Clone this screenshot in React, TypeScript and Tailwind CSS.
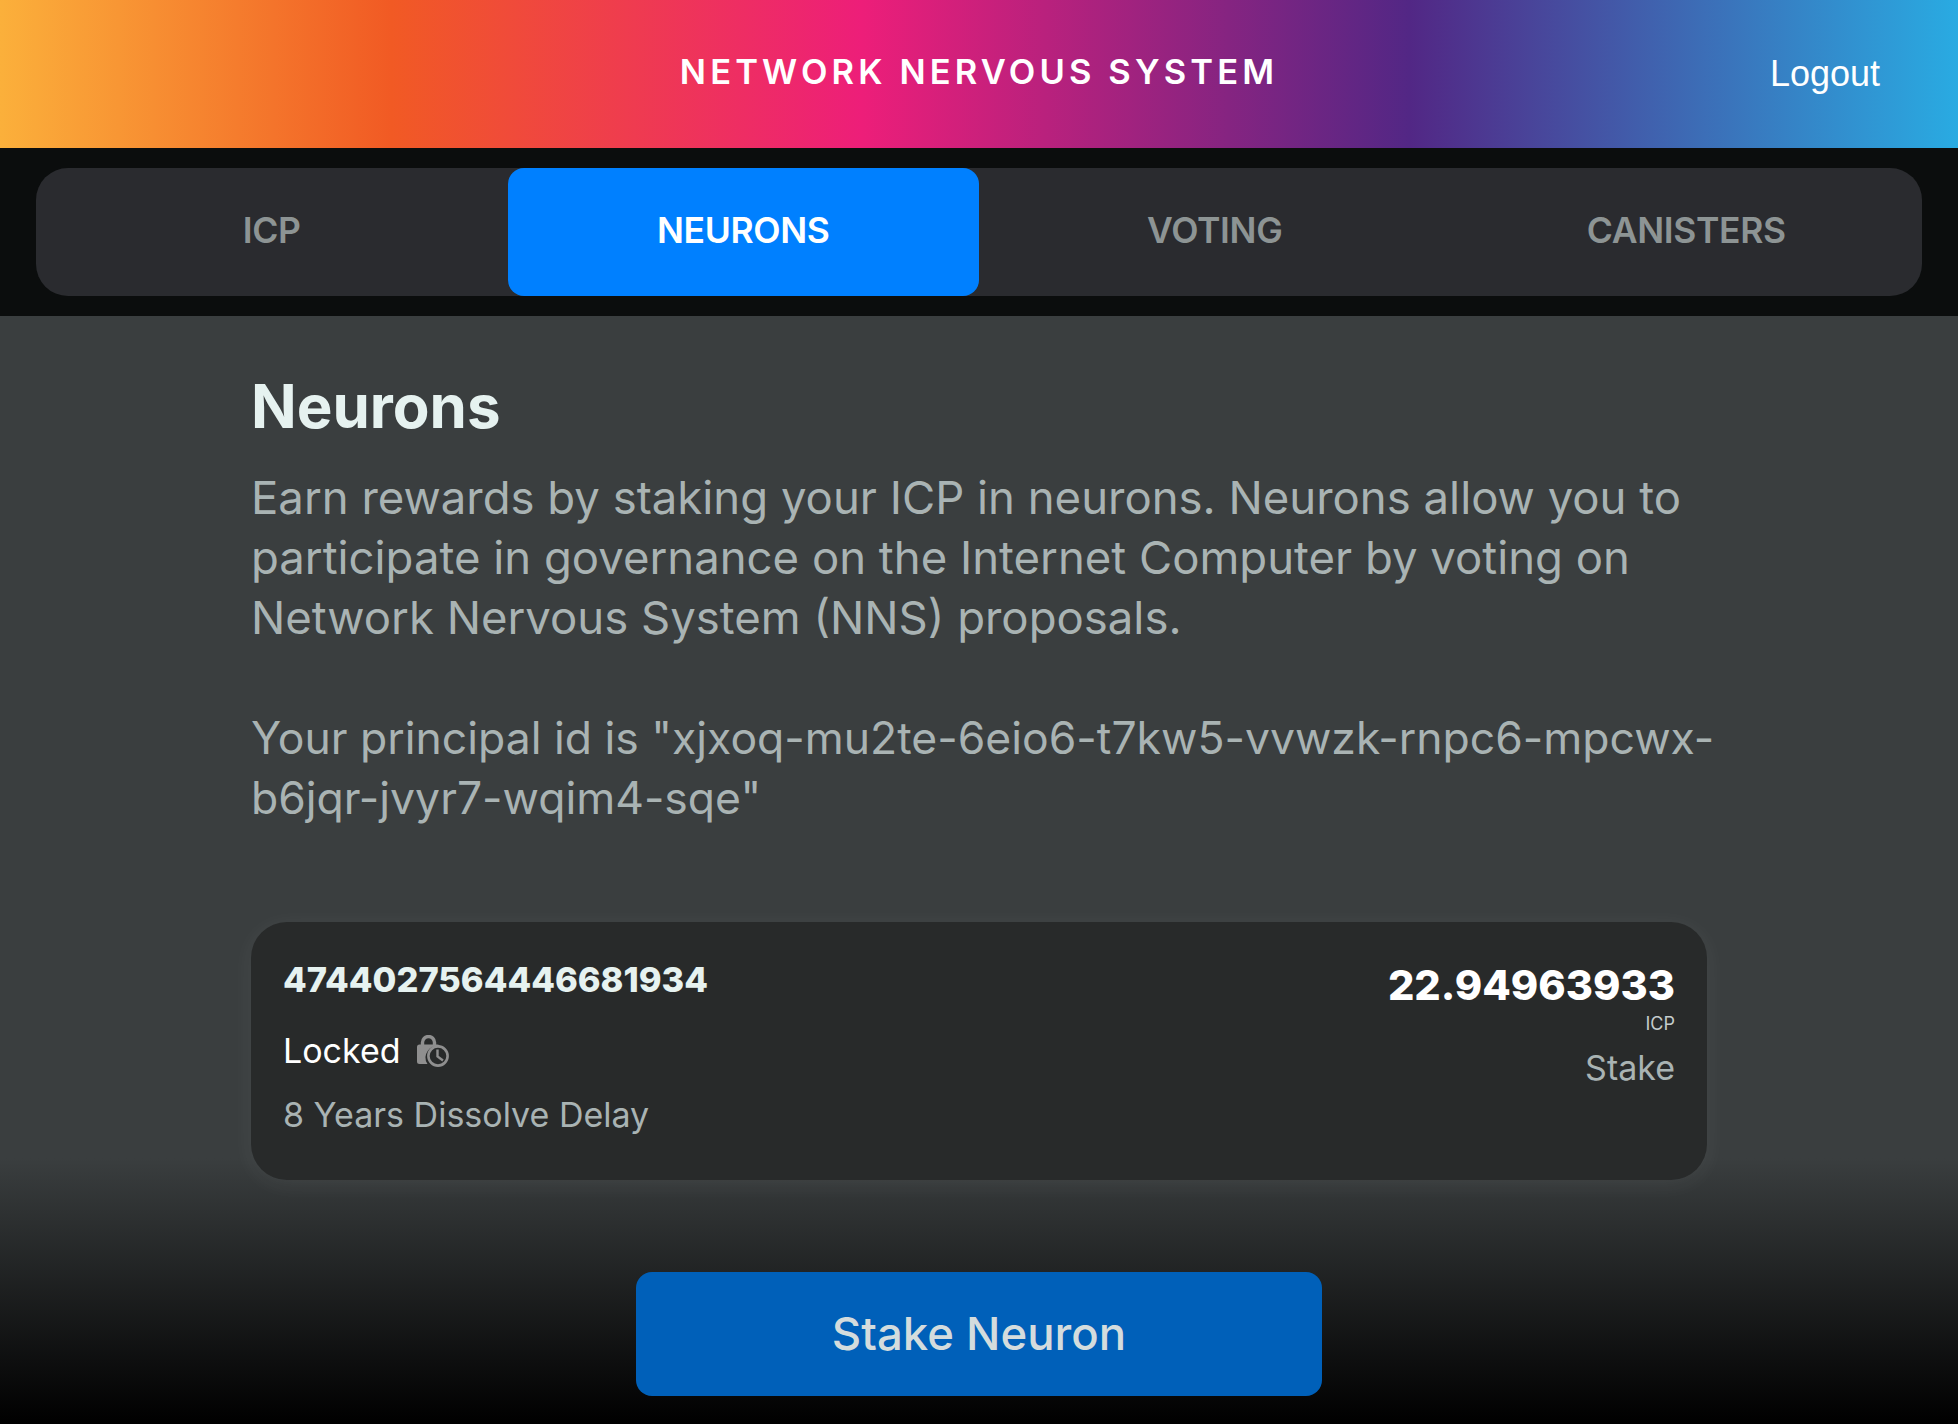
const tabs = ['ICP', 'NEURONS', 'VOTING', 'CANISTERS'];

function LockClockIcon() {
  return (
    <svg viewBox="0 0 32 32" className="w-8 h-8 shrink-0" fill="none">
      <path d="M5.5 11 V7.5 a6 6 0 0 1 12 0 V11" stroke="#8f8f8f" strokeWidth="3.4" />
      <path d="M0 12 a2.5 2.5 0 0 1 2.5-2.5 h18 a2.5 2.5 0 0 1 2.5 2 a11.5 11.5 0 0 0-12.5 17.5 H2.5 a2.5 2.5 0 0 1-2.5-2.5 z" fill="#8f8f8f" />
      <circle cx="21" cy="21" r="9.6" stroke="#8f8f8f" strokeWidth="2.6" />
      <path d="M20.5 14.5 V21.5 L26 25.5" stroke="#8f8f8f" strokeWidth="2.4" />
    </svg>
  );
}

export default function App() {
  return (
    <div className="h-screen flex flex-col overflow-hidden font-['Inter',sans-serif] bg-[#0b0d0d]">
      <header className="h-[148px] shrink-0 flex items-center justify-center relative bg-[linear-gradient(90deg,#fbb03b_0%,#f15a24_20%,#ed1e79_44%,#522785_72%,#29abe2_100%)]">
        <h1 className="pb-[5px] text-[34.5px] font-semibold tracking-[0.12em] text-white">NETWORK NERVOUS SYSTEM</h1>
        <button type="button" className="absolute right-[78px] text-[36px] text-white font-['Liberation_Sans',sans-serif]">
          Logout
        </button>
      </header>

      <nav className="h-[168px] shrink-0 px-9 py-5">
        <div className="h-[128px] flex rounded-[32px] bg-[#2a2b2f]">
          {tabs.map((t) => (
            <button
              key={t}
              type="button"
              className={`flex-1 pb-[3px] text-[35.5px] font-semibold tracking-[-0.01em] rounded-2xl ${
                t === 'NEURONS' ? 'bg-[#0080ff] text-white' : 'text-[#8d9494]'
              }`}
            >
              {t}
            </button>
          ))}
        </div>
      </nav>

      <main className="flex-1 flex flex-col pl-[251px] pr-[251px] pt-[58px] bg-[linear-gradient(180deg,#3a3e3f_0%,#3a3e3f_76%,#000000_100%)]">
        <h2 className="text-[60px] leading-[64px] font-bold text-[#e6f2f0]">Neurons</h2>
        <p className="mt-[30px] text-[45.5px] leading-[60px] text-[#a9b3b3] whitespace-nowrap">
          Earn rewards by staking your ICP in neurons. Neurons allow you to
          <br />
          participate in governance on the Internet Computer by voting on
          <br />
          Network Nervous System (NNS) proposals.
        </p>
        <p className="mt-[60px] text-[44.5px] leading-[60px] text-[#a9b3b3] whitespace-nowrap">
          Your principal id is "xjxoq-mu2te-6eio6-t7kw5-vvwzk-rnpc6-mpcwx-
          <br />
          b6jqr-jvyr7-wqim4-sqe"
        </p>

        <section className="mt-[94px] h-[258px] shrink-0 rounded-[36px] bg-[#282a2a] px-8 pt-[36px] flex justify-between shadow-[0_4px_24px_rgba(255,255,255,0.06)]">
          <div>
            <div className="text-[34.5px] leading-[44px] font-extrabold text-[#e6f2f0]">4744027564446681934</div>
            <div className="mt-[27px] flex items-center gap-4 text-[34px] leading-[44px] text-white">
              Locked <LockClockIcon />
            </div>
            <div className="mt-[20px] text-[34px] leading-[44px] text-[#a9b3b3]">8 Years Dissolve Delay</div>
          </div>
          <div className="flex flex-col items-end">
            <div className="text-[41.5px] leading-[54px] font-extrabold text-white">22.94963933</div>
            <div className="mt-[2px] text-[18px] leading-[20px] text-[#c4cccc]">ICP</div>
            <div className="mt-[12px] text-[34px] leading-[44px] text-[#a9b3b3]">Stake</div>
          </div>
        </section>

        <button
          type="button"
          className="mt-[92px] self-center w-[686px] h-[124px] shrink-0 rounded-2xl bg-[#0060b9] text-[45.5px] font-medium text-[#d4dcdd]"
        >
          Stake Neuron
        </button>
      </main>
    </div>
  );
}
